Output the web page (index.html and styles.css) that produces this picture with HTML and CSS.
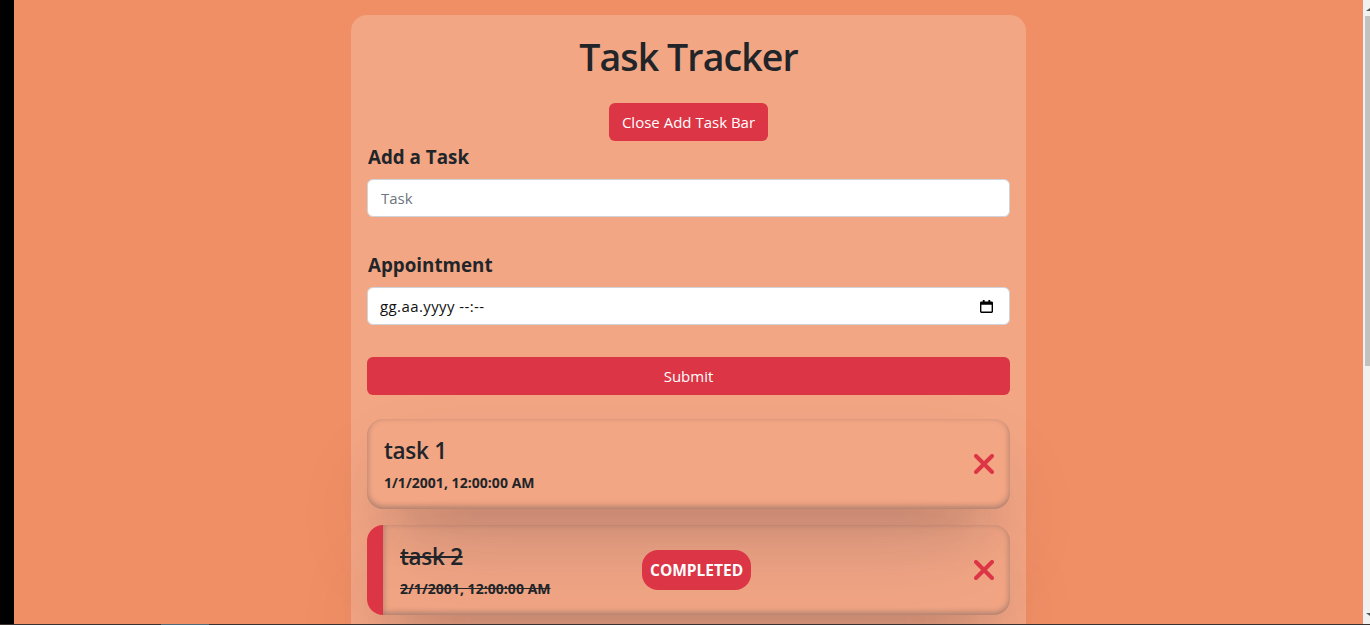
FILE: index.html
```html
<!DOCTYPE html>
<html lang="en">
<head>
    <meta charset="UTF-8">
    <title>Task Tracker</title>
    <link rel="stylesheet" href="styles.css">
</head>
<body>
    <div class="screen">
        <div class="edge"></div>

        <main class="page">
            <div class="container">
                <h1>Task Tracker</h1>
                <button class="btn btn-toggle">Close Add Task Bar</button>

                <!-- Add task form -->
                <form class="add-form">
                    <div class="field">
                        <label for="task">Add a Task</label>
                        <input type="text" id="task" placeholder="Task">
                    </div>
                    <div class="field">
                        <label for="appointment">Appointment</label>
                        <div class="date-input" id="appointment">
                            <span>gg.aa.yyyy --:--</span>
                            <svg class="calendar" viewBox="0 0 14 14" width="13" height="13">
                                <path d="M3 0h2v1.500h4V0h2v1.500h1.500A1.500 1.500 0 0 1 14 3v9.500a1.500 1.500 0 0 1-1.500 1.500h-11A1.500 1.500 0 0 1 0 12.500V3a1.500 1.500 0 0 1 1.500-1.500H3zM1.500 5v7.500h11V5z" fill="#000"/>
                            </svg>
                        </div>
                    </div>
                    <button type="button" class="btn btn-submit">Submit</button>
                </form>

                <!-- Task list -->
                <div class="task">
                    <div class="task-text">
                        <h3>task 1</h3>
                        <h6>1/1/2001, 12:00:00 AM</h6>
                    </div>
                    <svg class="delete" viewBox="0 0 20 20" width="20" height="20">
                        <path d="M2 2L18 18M18 2L2 18" stroke="#dc3545" stroke-width="4" stroke-linecap="round"/>
                    </svg>
                </div>

                <div class="task done">
                    <div class="task-text">
                        <h3>task 2</h3>
                        <h6>2/1/2001, 12:00:00 AM</h6>
                    </div>
                    <span class="badge">COMPLETED</span>
                    <svg class="delete" viewBox="0 0 20 20" width="20" height="20">
                        <path d="M2 2L18 18M18 2L2 18" stroke="#dc3545" stroke-width="4" stroke-linecap="round"/>
                    </svg>
                </div>
            </div>
        </main>

        <div class="scrollbar">
            <div class="arrow-up"></div>
            <div class="thumb"></div>
            <div class="arrow-down"></div>
        </div>
    </div>
    <div class="taskbar-line"><span></span></div>
</body>
</html>
```

FILE: styles.css
```css
* {
    margin: 0;
    padding: 0;
    box-sizing: border-box;
}

html, body {
    height: 100%;
    overflow: hidden;
}

body {
    font-family: "Open Sans", "Noto Sans", sans-serif;
    font-size: 15px;
    color: #212529;
    background-color: #f08f65;
    display: flex;
    flex-direction: column;
}

.screen {
    flex: 1;
    min-height: 0;
    display: flex;
}

.edge {
    width: 14px;
    background-color: #000;
}

.page {
    flex: 1;
    min-width: 0;
    overflow: hidden;
    padding-top: 15px;
}

.container {
    width: 675px;
    margin-left: 337px;
    padding: 0 16px 16px;
    background-color: #f3a684;
    border-radius: 16px;
    text-align: center;
}

h1 {
    font-size: 37.500px;
    font-weight: 600;
    letter-spacing: -0.900px;
    line-height: 48px;
    padding-top: 18px;
    margin-bottom: 22px;
}

.btn {
    height: 38px;
    border: none;
    border-radius: 6px;
    background-color: #dc3545;
    color: white;
    font-family: inherit;
    font-size: 15px;
}

.btn-toggle {
    padding: 0 13px;
    display: block;
    margin: 0 auto;
}

.add-form {
    text-align: left;
}

.field {
    margin-bottom: 32px;
}

label {
    display: block;
    font-size: 18.800px;
    font-weight: 700;
    line-height: 32px;
    height: 38px;
    padding-left: 1px;
}

input, .date-input {
    display: flex;
    align-items: center;
    width: 100%;
    height: 38px;
    padding: 0 13px;
    background-color: white;
    border: 1px solid #ced4da;
    border-radius: 6px;
    font-family: inherit;
    font-size: 15px;
    color: #212529;
}

input::placeholder {
    color: #6c757d;
    opacity: 1;
}

.date-input {
    justify-content: space-between;
    padding: 0 16px 0 12px;
    letter-spacing: 0.400px;
    color: #111;
}

.btn-submit {
    display: block;
    width: 100%;
    margin-bottom: 24px;
}

.task {
    display: flex;
    align-items: center;
    justify-content: space-between;
    position: relative;
    height: 90px;
    margin-bottom: 16px;
    padding: 0 16px 0 17px;
    text-align: left;
    border-radius: 16px;
    box-shadow: rgba(50, 50, 93, 0.2) 0px 50px 100px -20px,
                rgba(0, 0, 0, 0.3) 0px 30px 60px -30px,
                rgba(10, 37, 64, 0.35) 0px -2px 6px 0px inset;
}

.task-text {
    padding-bottom: 2px;
}

.task h3 {
    font-size: 22.500px;
    font-weight: 600;
    letter-spacing: -0.300px;
    line-height: 29px;
    margin-bottom: 9px;
}

.task h6 {
    font-size: 14px;
    font-weight: 700;
    letter-spacing: 0.040px;
    line-height: 17px;
}

.done {
    border-left: 16px solid #dc3545;
}

.done .task-text {
    text-decoration: line-through;
}

.badge {
    position: absolute;
    left: 259px;
    top: 25px;
    padding: 0 8px;
    height: 40px;
    line-height: 40px;
    background-color: #dc3545;
    color: white;
    font-size: 15.500px;
    font-weight: 700;
    border-radius: 16px;
}

.scrollbar {
    width: 7px;
    background-color: #f1f1f1;
    padding-top: 8px;
    overflow: hidden;
}

.arrow-up {
    width: 0;
    height: 0;
    margin: 0 0 5px 3px;
    border-left: 4px solid transparent;
    border-right: 4px solid transparent;
    border-bottom: 3px solid #505a60;
}

.thumb {
    height: 350px;
    margin-left: 2px;
    background-color: #c1c1c1;
}

.arrow-down {
    width: 0;
    height: 0;
    margin: 247px 0 0 3px;
    border-left: 4px solid transparent;
    border-right: 4px solid transparent;
    border-top: 3px solid #505a60;
}

.taskbar-line {
    height: 1px;
    background-color: #3a3230;
    padding-left: 161px;
}

.taskbar-line span {
    display: block;
    width: 48px;
    height: 1px;
    background-color: #4e6a78;
}
```
